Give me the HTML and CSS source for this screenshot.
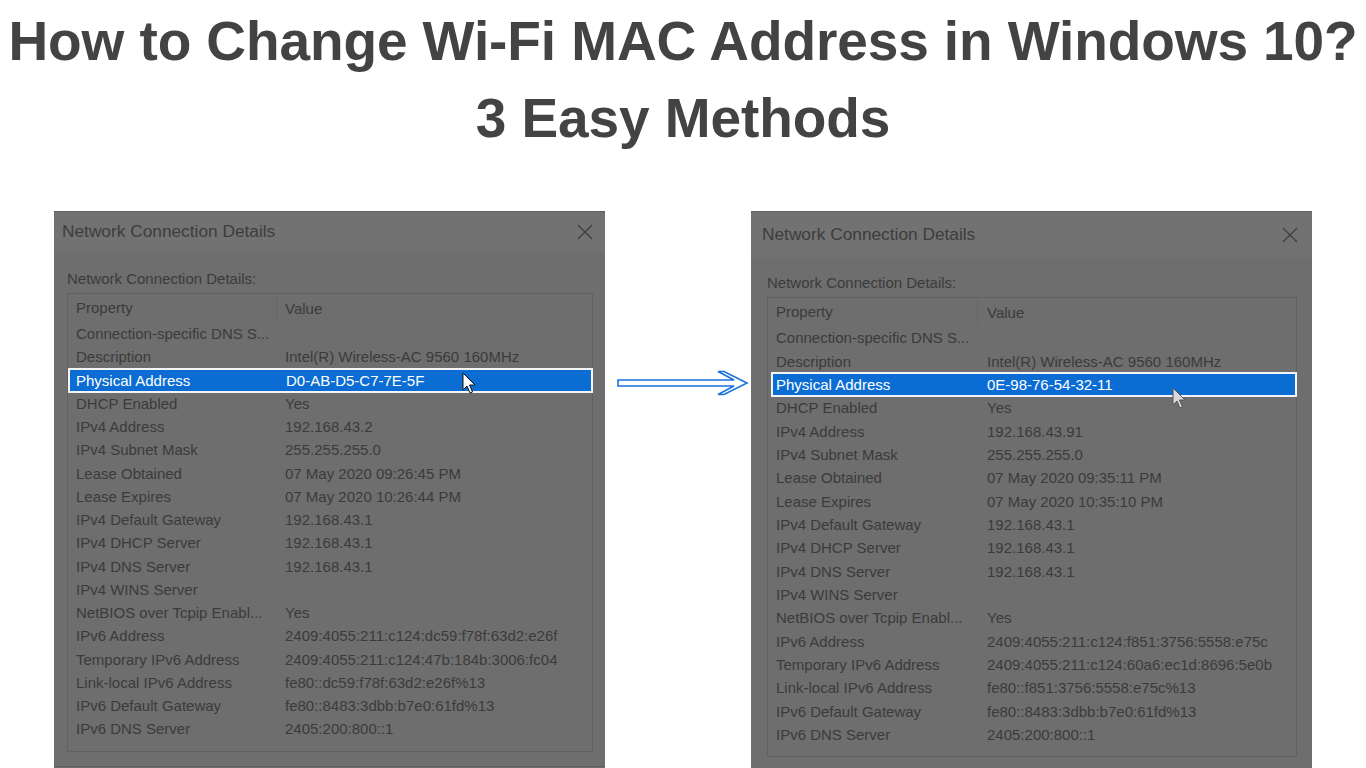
FILE: index.html
```html
<!DOCTYPE html>
<html lang="en">
  <head>
    <meta charset="UTF-8" />
    <meta name="viewport" content="width=device-width, initial-scale=1.0" />
    <title>How to Change Wi-Fi MAC Address in Windows 10?</title>
    <link rel="stylesheet" href="styles.css">
  </head>
  <body>
    <h1 class="headline">How to Change Wi-Fi MAC Address in Windows 10?<br>3 Easy Methods</h1>

    <div class="stage">
      <!-- before -->
      <section class="dialog">
        <header class="dialog-titlebar">
          <span class="dialog-title">Network Connection Details</span>
          <svg class="dialog-close" width="16" height="16" viewBox="0 0 16 16"><path d="M1 1L15 15M15 1L1 15" /></svg>
        </header>
        <div class="dialog-body">
          <p class="dialog-label">Network Connection Details:</p>
          <div class="listview">
            <div class="listview-head">
              <span class="head-prop">Property</span>
              <span class="head-value">Value</span>
            </div>
            <ul class="listview-rows">
              <li class="row"><span class="prop">Connection-specific DNS S...</span><span class="value"></span></li>
              <li class="row"><span class="prop">Description</span><span class="value">Intel(R) Wireless-AC 9560 160MHz</span></li>
              <li class="row is-selected">
                <span class="prop">Physical Address</span><span class="value">D0-AB-D5-C7-7E-5F</span>
                <svg class="cursor" width="14" height="22" viewBox="0 0 14 22"><path d="M1 1V18L5 14L8 21L10.5 20L7.5 13H13Z" /></svg>
              </li>
              <li class="row"><span class="prop">DHCP Enabled</span><span class="value">Yes</span></li>
              <li class="row"><span class="prop">IPv4 Address</span><span class="value">192.168.43.2</span></li>
              <li class="row"><span class="prop">IPv4 Subnet Mask</span><span class="value">255.255.255.0</span></li>
              <li class="row"><span class="prop">Lease Obtained</span><span class="value">07 May 2020 09:26:45 PM</span></li>
              <li class="row"><span class="prop">Lease Expires</span><span class="value">07 May 2020 10:26:44 PM</span></li>
              <li class="row"><span class="prop">IPv4 Default Gateway</span><span class="value">192.168.43.1</span></li>
              <li class="row"><span class="prop">IPv4 DHCP Server</span><span class="value">192.168.43.1</span></li>
              <li class="row"><span class="prop">IPv4 DNS Server</span><span class="value">192.168.43.1</span></li>
              <li class="row"><span class="prop">IPv4 WINS Server</span><span class="value"></span></li>
              <li class="row"><span class="prop">NetBIOS over Tcpip Enabl...</span><span class="value">Yes</span></li>
              <li class="row"><span class="prop">IPv6 Address</span><span class="value">2409:4055:211:c124:dc59:f78f:63d2:e26f</span></li>
              <li class="row"><span class="prop">Temporary IPv6 Address</span><span class="value">2409:4055:211:c124:47b:184b:3006:fc04</span></li>
              <li class="row"><span class="prop">Link-local IPv6 Address</span><span class="value">fe80::dc59:f78f:63d2:e26f%13</span></li>
              <li class="row"><span class="prop">IPv6 Default Gateway</span><span class="value">fe80::8483:3dbb:b7e0:61fd%13</span></li>
              <li class="row"><span class="prop">IPv6 DNS Server</span><span class="value">2405:200:800::1</span></li>
            </ul>
          </div>
          <div class="dialog-footer"></div>
        </div>
      </section>

      <div class="pointer">
        <svg width="132" height="30" viewBox="0 0 132 30">
          <path d="M1 12H117L101 3.5H107L130 15L107 26.5H101L117 18H1Z" />
        </svg>
      </div>

      <!-- after -->
      <section class="dialog dialog--after">
        <header class="dialog-titlebar">
          <span class="dialog-title">Network Connection Details</span>
          <svg class="dialog-close" width="16" height="16" viewBox="0 0 16 16"><path d="M1 1L15 15M15 1L1 15" /></svg>
        </header>
        <div class="dialog-body">
          <p class="dialog-label">Network Connection Details:</p>
          <div class="listview">
            <div class="listview-head">
              <span class="head-prop">Property</span>
              <span class="head-value">Value</span>
            </div>
            <ul class="listview-rows">
              <li class="row"><span class="prop">Connection-specific DNS S...</span><span class="value"></span></li>
              <li class="row"><span class="prop">Description</span><span class="value">Intel(R) Wireless-AC 9560 160MHz</span></li>
              <li class="row is-selected">
                <span class="prop">Physical Address</span><span class="value">0E-98-76-54-32-11</span>
                <svg class="cursor cursor--dim" width="14" height="22" viewBox="0 0 14 22"><path d="M1 1V18L5 14L8 21L10.5 20L7.5 13H13Z" /></svg>
              </li>
              <li class="row"><span class="prop">DHCP Enabled</span><span class="value">Yes</span></li>
              <li class="row"><span class="prop">IPv4 Address</span><span class="value">192.168.43.91</span></li>
              <li class="row"><span class="prop">IPv4 Subnet Mask</span><span class="value">255.255.255.0</span></li>
              <li class="row"><span class="prop">Lease Obtained</span><span class="value">07 May 2020 09:35:11 PM</span></li>
              <li class="row"><span class="prop">Lease Expires</span><span class="value">07 May 2020 10:35:10 PM</span></li>
              <li class="row"><span class="prop">IPv4 Default Gateway</span><span class="value">192.168.43.1</span></li>
              <li class="row"><span class="prop">IPv4 DHCP Server</span><span class="value">192.168.43.1</span></li>
              <li class="row"><span class="prop">IPv4 DNS Server</span><span class="value">192.168.43.1</span></li>
              <li class="row"><span class="prop">IPv4 WINS Server</span><span class="value"></span></li>
              <li class="row"><span class="prop">NetBIOS over Tcpip Enabl...</span><span class="value">Yes</span></li>
              <li class="row"><span class="prop">IPv6 Address</span><span class="value">2409:4055:211:c124:f851:3756:5558:e75c</span></li>
              <li class="row"><span class="prop">Temporary IPv6 Address</span><span class="value">2409:4055:211:c124:60a6:ec1d:8696:5e0b</span></li>
              <li class="row"><span class="prop">Link-local IPv6 Address</span><span class="value">fe80::f851:3756:5558:e75c%13</span></li>
              <li class="row"><span class="prop">IPv6 Default Gateway</span><span class="value">fe80::8483:3dbb:b7e0:61fd%13</span></li>
              <li class="row"><span class="prop">IPv6 DNS Server</span><span class="value">2405:200:800::1</span></li>
            </ul>
          </div>
          <div class="dialog-footer"></div>
        </div>
      </section>
    </div>
  </body>
</html>
```

FILE: styles.css
```css
* {
  margin: 0;
  padding: 0;
  list-style: none;
  box-sizing: border-box;
}
html,
body {
  width: 100%;
  height: 100%;
  overflow: hidden;
  background-color: #fff;
}
body {
  font-family: 'Liberation Sans', Arial, sans-serif;
}
.headline {
  margin-top: 3px;
  font-size: 55px;
  line-height: 77px;
  font-weight: bold;
  text-align: center;
  color: #434343;
  letter-spacing: -0.1px;
}
.stage {
  display: flex;
  align-items: flex-start;
  margin-top: 54px;
  padding-left: 54px;
}

/* 对话框 */
.dialog {
  width: 551px;
  height: 580px;
  flex-shrink: 0;
  background-color: #6e6e6e;
  border-top: 1px solid #626262;
  color: #3b3b3b;
  font-size: 15px;
}
.dialog-titlebar {
  height: 39px;
  display: flex;
  align-items: center;
  justify-content: space-between;
  padding: 0 12px 0 8px;
  background-color: #727272;
}
.dialog-title {
  font-size: 17.3px;
  color: #3d3d3d;
}
.dialog-close path {
  fill: none;
  stroke: #3f3f3f;
  stroke-width: 1.3;
}
.dialog-body {
  padding: 0 12px 0 13px;
}
.dialog-label {
  margin-top: 19px;
  line-height: 18px;
}
.listview {
  margin-top: 5px;
  height: 459px;
  border: 1px solid #616161;
}
.listview-head {
  display: flex;
  align-items: center;
  height: 28px;
}
.head-prop {
  width: 209px;
  line-height: 24px;
  padding-left: 8px;
  border-right: 1px solid #656565;
}
.head-value {
  padding-left: 8px;
}
.row {
  position: relative;
  display: flex;
  align-items: center;
  height: 23.25px;
  white-space: nowrap;
}
.prop {
  width: 217px;
  flex-shrink: 0;
  padding-left: 8px;
}
.row.is-selected {
  margin: 0 0 0 1px;
  background-color: #0b6dd3;
  outline: 2px solid #f4f4f4;
  outline-offset: -1px;
  color: #fff;
}
.row.is-selected .prop {
  padding-left: 7px;
}
.cursor {
  position: absolute;
  left: 393px;
  top: 3px;
}
.cursor path {
  fill: #fff;
  stroke: #111;
  stroke-width: 1;
  stroke-linejoin: round;
}
.cursor--dim path {
  fill: #d8d8d8;
  stroke: #555;
}
.dialog-footer {
  margin: 14px -12px 0 -13px;
  border-top: 1px solid #5e5e5e;
  height: 20px;
}

/* 箭头 */
.pointer {
  margin: 157px 0 0 12px;
  width: 134px;
  flex-shrink: 0;
}
.pointer svg {
  display: block;
}
.pointer path {
  fill: #fff;
  stroke: #1a72da;
  stroke-width: 1.6;
  stroke-linejoin: miter;
}

/* 修改后的对话框，截图稍微放大 */
.dialog--after {
  width: 561px;
  margin-left: 0;
}
.dialog--after .dialog-titlebar {
  height: 45px;
  padding: 0 14px 0 11px;
}
.dialog--after .dialog-body {
  padding: 0 15px 0 16px;
}
.dialog--after .dialog-label {
  margin-top: 17px;
}
.dialog--after .listview {
  height: 460px;
}
.dialog--after .head-prop {
  width: 210px;
}
.dialog--after .head-value {
  padding-left: 9px;
}
.dialog--after .row {
  height: 23.35px;
}
.dialog--after .prop {
  width: 219px;
}
.dialog--after .row.is-selected {
  margin-left: 4px;
}
.dialog--after .row.is-selected .prop {
  width: 215px;
  padding-left: 4px;
}
.dialog--after .cursor {
  left: 400px;
  top: 14px;
}
```
